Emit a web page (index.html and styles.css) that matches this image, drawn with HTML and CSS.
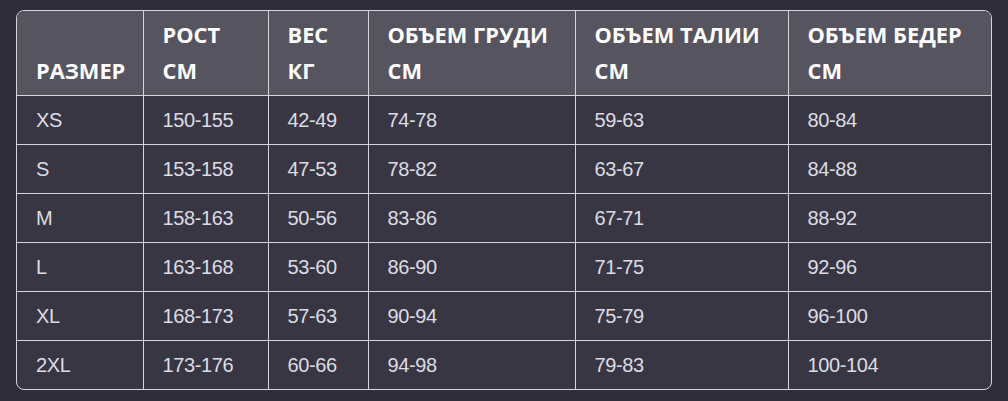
FILE: index.html
```html
<!DOCTYPE html>
<html lang="ru">
<head>
<meta charset="utf-8">
<link rel="stylesheet" href="styles.css">
</head>
<body>
<div class="wrap">
<table class="sizes">
<colgroup>
<col class="c1"><col class="c2"><col class="c3"><col class="c4"><col class="c5"><col class="c6">
</colgroup>
<thead>
<tr>
<th>РАЗМЕР</th>
<th>РОСТ<br>СМ</th>
<th>ВЕС<br>КГ</th>
<th>ОБЪЕМ ГРУДИ<br>СМ</th>
<th>ОБЪЕМ ТАЛИИ<br>СМ</th>
<th>ОБЪЕМ БЕДЕР<br>СМ</th>
</tr>
</thead>
<tbody>
<tr><td>XS</td><td>150-155</td><td>42-49</td><td>74-78</td><td>59-63</td><td>80-84</td></tr>
<tr><td>S</td><td>153-158</td><td>47-53</td><td>78-82</td><td>63-67</td><td>84-88</td></tr>
<tr><td>M</td><td>158-163</td><td>50-56</td><td>83-86</td><td>67-71</td><td>88-92</td></tr>
<tr><td>L</td><td>163-168</td><td>53-60</td><td>86-90</td><td>71-75</td><td>92-96</td></tr>
<tr><td>XL</td><td>168-173</td><td>57-63</td><td>90-94</td><td>75-79</td><td>96-100</td></tr>
<tr><td>2XL</td><td>173-176</td><td>60-66</td><td>94-98</td><td>79-83</td><td>100-104</td></tr>
</tbody>
</table>
</div>
</body>
</html>
```
FILE: styles.css
```css
html, body {
  margin: 0;
  padding: 0;
  background: #302e3a;
}
body {
  padding: 10px 16px;
}
.wrap {
  width: 974px;
  border: 1px solid #d6d5dd;
  border-radius: 8px;
  overflow: hidden;
  background: #383643;
}
.sizes {
  width: 100%;
  border-collapse: collapse;
  table-layout: fixed;
}
.c1 { width: 126px; }
.c2 { width: 125px; }
.c3 { width: 100px; }
.c4 { width: 207px; }
.c5 { width: 213px; }
.c6 { width: 203px; }
.sizes th, .sizes td {
  border: 1px solid #d6d5dd;
  text-align: left;
  vertical-align: middle;
  padding: 0 0 0 19px;
}
.sizes tr > :first-child { border-left: none; }
.sizes tr > :last-child { border-right: none; }
.sizes thead th { border-top: none; }
.sizes tbody tr:last-child td { border-bottom: none; }
.sizes th {
  background: #56545f;
  color: #ffffff;
  font-family: "Open Sans", sans-serif;
  font-weight: 700;
  font-size: 21.8px;
  line-height: 36px;
  height: 72px;
  padding-top: 6px;
  padding-bottom: 6px;
  vertical-align: bottom;
  white-space: nowrap;
}
.sizes td {
  color: #dcdce4;
  font-family: "Liberation Sans", Arial, sans-serif;
  font-size: 20px;
  letter-spacing: -0.4px;
  height: 48px;
}
```
